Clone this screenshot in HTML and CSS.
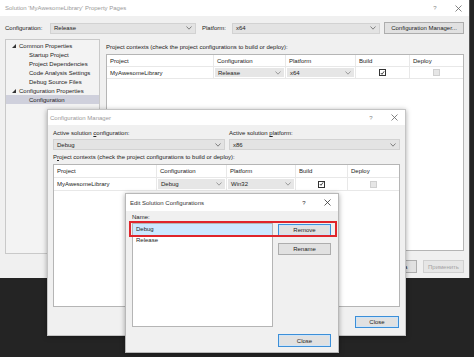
FILE: index.html
```html
<!doctype html>
<html lang="en">
<head>
    <meta charset="UTF-8">
    <title>Property Pages</title>
    <link rel="stylesheet" href="styles.css">
</head>
<body>
<div class="desktop">

    <!-- main property pages window -->
    <div class="window propWin">
        <div class="titleBar">
            <span class="titleText">Solution 'MyAwesomeLibrary' Property Pages</span>
            <span class="titleHelp">?</span>
            <span class="titleClose"><svg width="7" height="7" viewBox="0 0 7 7"><path d="M0.5 0.5L6.5 6.5M6.5 0.5L0.5 6.5" stroke="#666" stroke-width="0.8"/></svg></span>
        </div>
        <div class="propBody">
            <div class="configRow">
                <span class="lblConfig">Configuration:</span>
                <div class="combo comboConfig"><span>Release</span><svg class="chev" width="6" height="4" viewBox="0 0 6 4"><polyline points="0.5,0.5 3,3.2 5.5,0.5" fill="none" stroke="#666" stroke-width="0.8"/></svg></div>
                <span class="lblPlatform">Platform:</span>
                <div class="combo comboPlatform"><span>x64</span><svg class="chev" width="6" height="4" viewBox="0 0 6 4"><polyline points="0.5,0.5 3,3.2 5.5,0.5" fill="none" stroke="#666" stroke-width="0.8"/></svg></div>
                <button class="btn btnCfgMgr">Configuration Manager...</button>
            </div>
            <div class="propMain">
                <ul class="tree">
                    <li class="lvl0"><svg class="arrow" width="4" height="4" viewBox="0 0 4 4"><polygon points="4,0 4,4 0,4" fill="#333"/></svg>Common Properties</li>
                    <li class="lvl1">Startup Project</li>
                    <li class="lvl1">Project Dependencies</li>
                    <li class="lvl1">Code Analysis Settings</li>
                    <li class="lvl1">Debug Source Files</li>
                    <li class="lvl0"><svg class="arrow" width="4" height="4" viewBox="0 0 4 4"><polygon points="4,0 4,4 0,4" fill="#333"/></svg>Configuration Properties</li>
                    <li class="lvl1 selected">Configuration</li>
                </ul>
                <div class="propRight">
                    <div class="caption">Project contexts (check the project configurations to build or deploy):</div>
                    <div class="grid gridProp">
                        <div class="cell head">Project</div>
                        <div class="cell head">Configuration</div>
                        <div class="cell head">Platform</div>
                        <div class="cell head">Build</div>
                        <div class="cell head">Deploy</div>
                        <div class="cell">MyAwesomeLibrary</div>
                        <div class="cell cellCombo"><div class="combo"><span>Release</span><svg class="chev" width="6" height="4" viewBox="0 0 6 4"><polyline points="0.5,0.5 3,3.2 5.5,0.5" fill="none" stroke="#888" stroke-width="0.8"/></svg></div></div>
                        <div class="cell cellCombo"><div class="combo"><span>x64</span><svg class="chev" width="6" height="4" viewBox="0 0 6 4"><polyline points="0.5,0.5 3,3.2 5.5,0.5" fill="none" stroke="#888" stroke-width="0.8"/></svg></div></div>
                        <div class="cell cellCheck"><span class="check"><svg width="6" height="6" viewBox="0 0 6 6"><polyline points="1,3 2.4,4.6 5,1" fill="none" stroke="#222" stroke-width="1"/></svg></span></div>
                        <div class="cell cellCheck"><span class="check off"></span></div>
                    </div>
                </div>
            </div>
            <div class="footer">
                <button class="btn btnWide">ОК</button>
                <button class="btn btnWide">Отмена</button>
                <button class="btn btnWide disabled">Применить</button>
            </div>
        </div>
    </div>

    <!-- configuration manager -->
    <div class="window cfgWin">
        <div class="titleBar">
            <span class="titleText">Configuration Manager</span>
            <span class="titleHelp">?</span>
            <span class="titleClose"><svg width="7" height="7" viewBox="0 0 7 7"><path d="M0.5 0.5L6.5 6.5M6.5 0.5L0.5 6.5" stroke="#666" stroke-width="0.8"/></svg></span>
        </div>
        <div class="cfgBody">
            <div class="activeRow">
                <div>
                    <div class="lbl">Active solution <u>c</u>onfiguration:</div>
                    <div class="combo comboActive"><span>Debug</span><svg class="chev" width="6" height="4" viewBox="0 0 6 4"><polyline points="0.5,0.5 3,3.2 5.5,0.5" fill="none" stroke="#666" stroke-width="0.8"/></svg></div>
                </div>
                <div>
                    <div class="lbl">Active solution <u>p</u>latform:</div>
                    <div class="combo comboActive"><span>x86</span><svg class="chev" width="6" height="4" viewBox="0 0 6 4"><polyline points="0.5,0.5 3,3.2 5.5,0.5" fill="none" stroke="#666" stroke-width="0.8"/></svg></div>
                </div>
            </div>
            <div class="lbl cfgCaption">P<u>r</u>oject contexts (check the project configurations to build or deploy):</div>
            <div class="grid gridCfg">
                <div class="cell head">Project</div>
                <div class="cell head">Configuration</div>
                <div class="cell head">Platform</div>
                <div class="cell head">Build</div>
                <div class="cell head">Deploy</div>
                <div class="cell">MyAwesomeLibrary</div>
                <div class="cell cellCombo"><div class="combo"><span>Debug</span><svg class="chev" width="6" height="4" viewBox="0 0 6 4"><polyline points="0.5,0.5 3,3.2 5.5,0.5" fill="none" stroke="#888" stroke-width="0.8"/></svg></div></div>
                <div class="cell cellCombo"><div class="combo"><span>Win32</span><svg class="chev" width="6" height="4" viewBox="0 0 6 4"><polyline points="0.5,0.5 3,3.2 5.5,0.5" fill="none" stroke="#888" stroke-width="0.8"/></svg></div></div>
                <div class="cell cellCheck"><span class="check"><svg width="6" height="6" viewBox="0 0 6 6"><polyline points="1,3 2.4,4.6 5,1" fill="none" stroke="#222" stroke-width="1"/></svg></span></div>
                <div class="cell cellCheck"><span class="check off"></span></div>
            </div>
            <div class="cfgFooter">
                <button class="btn btnClose focus">Close</button>
            </div>
        </div>
    </div>

    <!-- edit solution configurations -->
    <div class="window editWin">
        <div class="titleBar active">
            <span class="titleText">Edit Solution Configurations</span>
            <span class="titleHelp">?</span>
            <span class="titleClose"><svg width="7" height="7" viewBox="0 0 7 7"><path d="M0.5 0.5L6.5 6.5M6.5 0.5L0.5 6.5" stroke="#333" stroke-width="0.8"/></svg></span>
        </div>
        <div class="editBody">
            <div class="lbl nameLbl">Name:</div>
            <div class="editMain">
                <ul class="listBox">
                    <li class="selected">Debug</li>
                    <li>Release</li>
                </ul>
                <div class="editBtns">
                    <button class="btn focus">Remove</button>
                    <button class="btn">Rename</button>
                </div>
            </div>
            <div class="editFooter">
                <button class="btn btnClose focus">Close</button>
            </div>
        </div>
    </div>

    <div class="highlight"></div>
</div>
</body>
</html>
```

FILE: styles.css
```css
* {
    box-sizing: border-box;
}

body {
    margin: 0;
    background-color: #242424;
    font-family: "Liberation Sans", Arial, sans-serif;
    font-size: 6px;
    color: #222;
}

.desktop {
    position: relative;
    width: 474px;
    height: 357px;
    overflow: hidden;
}

.window {
    position: absolute;
    display: flex;
    flex-direction: column;
    background-color: #f0f0f0;
}

.propWin {
    left: 0;
    top: 0;
    width: 470px;
    height: 278px;
    border-right: 1px solid #555;
}

.cfgWin {
    left: 47px;
    top: 109px;
    width: 359px;
    height: 227px;
    border: 1px solid #c4c4c4;
    box-shadow: 0 1px 5px rgba(0, 0, 0, 0.35);
}

.editWin {
    left: 125px;
    top: 193px;
    width: 214px;
    height: 160px;
    border: 1px solid #b8b8b8;
    box-shadow: 0 1px 5px rgba(0, 0, 0, 0.35);
}

/* title bars */

.titleBar {
    display: flex;
    align-items: center;
    height: 16px;
    padding-left: 5px;
    background-color: #fff;
    color: #9a9a9a;
    flex-shrink: 0;
}

.cfgWin .titleBar {
    height: 15px;
    padding-left: 2px;
}

.editWin .titleBar {
    height: 17px;
    padding-left: 4px;
}

.titleBar.active {
    color: #333;
}

.titleText {
    flex: 1;
}

.titleHelp {
    width: 24px;
    text-align: center;
    color: #888;
}

.titleBar.active .titleHelp {
    color: #333;
}

.titleClose {
    width: 22px;
    display: flex;
    justify-content: center;
}

/* controls */

.combo {
    display: flex;
    align-items: center;
    justify-content: space-between;
    height: 11px;
    padding: 0 3px 0 3px;
    background-color: #e3e3e3;
    border: 1px solid #d2d2d2;
}

.btn {
    font-family: inherit;
    font-size: 6px;
    color: #222;
    background-color: #e1e1e1;
    border: 1px solid #adadad;
    padding: 0;
    height: 12px;
}

.btn.focus {
    border: 1px solid #3c8fd8;
    box-shadow: inset 0 0 0 1px #cfe4f7;
}

.btn.disabled {
    color: #a4a4a4;
    background-color: #e6e6e6;
    border-color: #d0d0d0;
}

.lbl u {
    text-decoration-thickness: 0.5px;
}

/* property pages */

.propBody {
    padding: 6px 5px 0 5px;
    flex: 1;
}

.configRow {
    display: flex;
    align-items: center;
    height: 12px;
}

.lblConfig {
    width: 45px;
}

.comboConfig {
    width: 146px;
}

.lblPlatform {
    width: 30px;
    margin-left: 6px;
}

.comboPlatform {
    width: 148px;
}

.btnCfgMgr {
    width: 80px;
    margin-left: 4px;
}

.propMain {
    display: flex;
    margin-top: 5px;
    height: 215px;
}

.tree {
    list-style: none;
    margin: 0;
    padding: 1px 0 0 0;
    width: 95px;
    border: 1px solid #c9c9c9;
    background-color: #f3f3f3;
}

.tree li {
    display: flex;
    align-items: center;
    height: 9px;
}

.tree .lvl0 {
    padding-left: 6px;
}

.tree .lvl1 {
    padding-left: 23px;
}

.tree .arrow {
    margin-right: 3px;
}

.tree .selected {
    background-color: #cfd0dc;
}

.propRight {
    flex: 1;
    margin-left: 6px;
    display: flex;
    flex-direction: column;
}

.caption {
    line-height: 10px;
    margin-top: 3px;
}

.grid {
    display: grid;
    align-content: start;
    grid-auto-rows: 12px;
    background-color: #fff;
    border: 1px solid #b5b5b5;
}

.gridProp {
    margin-top: 2px;
    height: 197px;
    grid-template-columns: 107px 72px 70px 54px 1fr;
}

.gridCfg {
    margin-top: 3px;
    height: 143px;
    grid-template-rows: 13px 13px;
    grid-template-columns: 103px 70px 69px 52px 1fr;
}

.cell {
    display: flex;
    align-items: center;
    padding-left: 3px;
    border-bottom: 1px solid #e8e8e8;
    border-right: 1px solid #e8e8e8;
    white-space: nowrap;
    overflow: hidden;
}

.cell:nth-child(5n) {
    border-right: none;
}

.cellCombo {
    padding: 1px;
}

.cellCombo .combo {
    width: 100%;
    height: 100%;
    border: none;
    background-color: #e6e6e6;
}

.cellCheck {
    justify-content: center;
    padding-left: 0;
}

.check {
    display: flex;
    align-items: center;
    justify-content: center;
    width: 7px;
    height: 7px;
    border: 1px solid #333;
    background-color: #fff;
}

.check.off {
    border-color: #d0d0d0;
    background-color: #e6e6e6;
}

.footer {
    display: flex;
    justify-content: flex-end;
    gap: 6px;
    margin-top: 6px;
}

.btnWide {
    width: 41px;
    height: 13px;
}

/* configuration manager */

.cfgBody {
    flex: 1;
    display: flex;
    flex-direction: column;
    padding: 0 5px;
}

.activeRow {
    display: grid;
    grid-template-columns: 172px 1fr;
    column-gap: 4px;
    margin-top: 4px;
}

.lbl {
    line-height: 8px;
}

.comboActive {
    margin-top: 2px;
}

.cfgCaption {
    margin-top: 3px;
}

.cfgFooter {
    display: flex;
    justify-content: flex-end;
    padding-right: 1px;
    margin-top: 9px;
}

.btnClose {
    width: 44px;
    height: 12px;
}

/* edit solution configurations */

.editBody {
    flex: 1;
    display: flex;
    flex-direction: column;
    padding: 0 7px 0 6px;
}

.nameLbl {
    margin-top: 2px;
    padding-left: 0;
}

.editMain {
    display: flex;
    margin-top: 2px;
}

.listBox {
    list-style: none;
    margin: 0;
    padding: 0;
    width: 141px;
    height: 104px;
    background-color: #fff;
    border: 1px solid #b5b5b5;
}

.listBox li {
    height: 11px;
    line-height: 11px;
    padding-left: 3px;
}

.listBox .selected {
    background-color: #cce8ff;
}

.editBtns {
    display: flex;
    flex-direction: column;
    gap: 7px;
    margin-left: 5px;
    padding-top: 1px;
}

.editBtns .btn {
    width: 53px;
}

.editFooter {
    display: flex;
    justify-content: flex-end;
    margin-top: 7px;
}

.editFooter .btnClose {
    width: 53px;
    height: 13px;
}

/* red annotation box */

.highlight {
    position: absolute;
    left: 129px;
    top: 221px;
    width: 208px;
    height: 16px;
    border: 2px solid #e0252b;
}
```
